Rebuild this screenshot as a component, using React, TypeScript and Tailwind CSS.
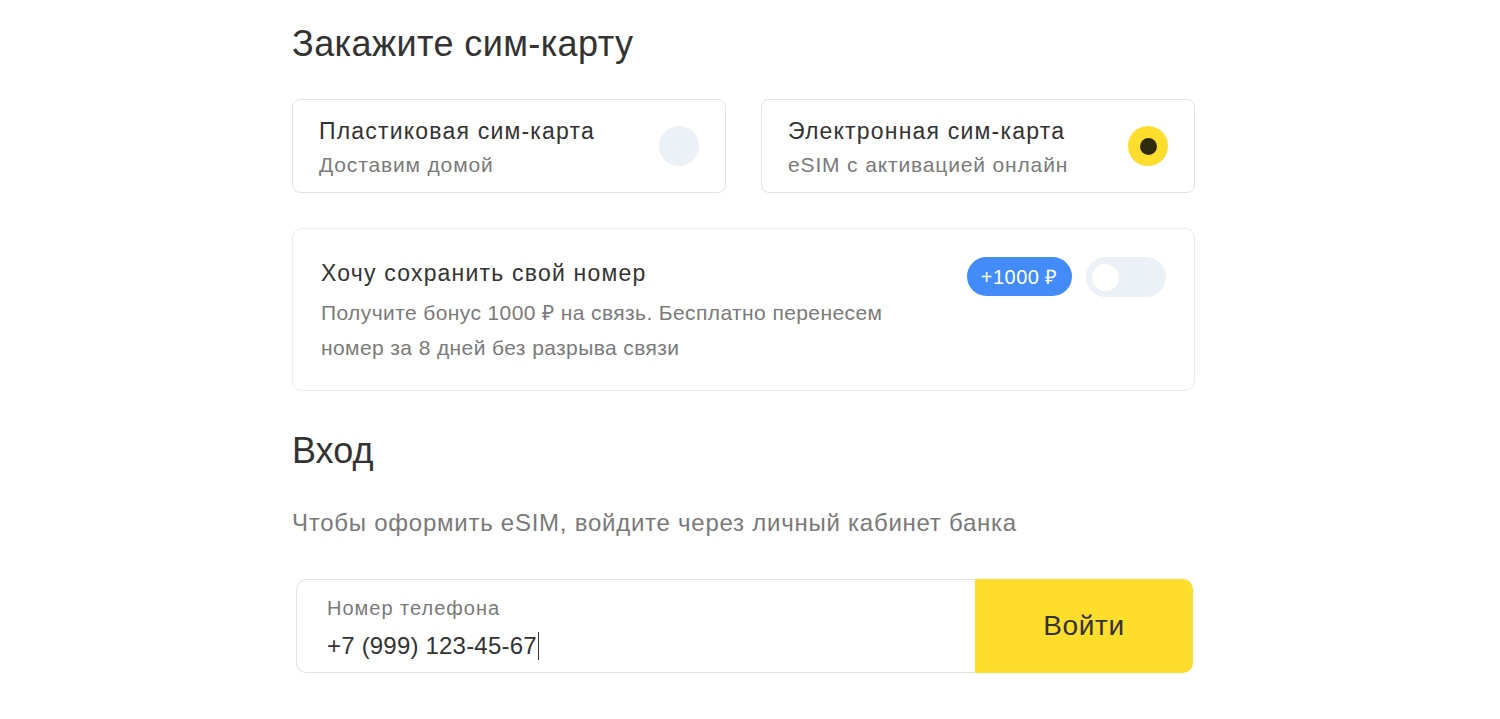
import React, { useState } from 'react';

const font = { fontFamily: '"Liberation Sans", Arial, sans-serif' };

type SimOption = { id: string; title: string; subtitle: string };

const simOptions: SimOption[] = [
  { id: 'plastic', title: 'Пластиковая сим-карта', subtitle: 'Доставим домой' },
  { id: 'esim', title: 'Электронная сим-карта', subtitle: 'eSIM с активацией онлайн' },
];

const Radio = ({ checked }: { checked: boolean }) =>
  checked ? (
    <span className="flex h-10 w-10 shrink-0 items-center justify-center rounded-full bg-[#ffdd2d]">
      <span className="h-[17px] w-[17px] rounded-full bg-[#2e2a0e]" />
    </span>
  ) : (
    <span className="h-10 w-10 shrink-0 rounded-full bg-[#ecf1f7]" />
  );

export default function App() {
  const [sim, setSim] = useState('esim');
  const [keepNumber, setKeepNumber] = useState(false);

  return (
    <div className="min-h-screen bg-white text-[#333333]" style={font}>
      <div className="ml-[292px] w-[903px] pt-[17px]">
        {/* Выбор сим-карты */}
        <h1 className="text-[36px] leading-[54px] font-normal tracking-[0.4px]">Закажите сим-карту</h1>

        <div className="mt-[28px] grid grid-cols-2 gap-[35px]">
          {simOptions.map((o) => (
            <button
              key={o.id}
              onClick={() => setSim(o.id)}
              className="flex h-[94px] items-center justify-between rounded-[8px] border border-[#e3e3e3] pl-[26px] pr-[26px] text-left"
            >
              <div className="self-start pt-[15px]">
                <div className="text-[23px] leading-[32px] tracking-[1.2px] text-[#333333]">{o.title}</div>
                <div className="text-[21px] leading-[36px] tracking-[0.85px] text-[#7a7a7a]">{o.subtitle}</div>
              </div>
              <Radio checked={sim === o.id} />
            </button>
          ))}
        </div>

        {/* Перенос номера */}
        <div className="mt-[35px] flex h-[163px] justify-between rounded-[10px] border border-[#ececec] pl-[28px] pr-[28px] pt-[27px]">
          <div>
            <div className="text-[23px] leading-[34px] tracking-[1.2px] text-[#333333]">Хочу сохранить свой номер</div>
            <p className="mt-[5px] text-[21px] leading-[35px] tracking-[0.4px] text-[#7a7a7a]">
              Получите бонус 1000 ₽ на связь. Бесплатно перенесем
              <br />
              номер за 8 дней без разрыва связи
            </p>
          </div>
          <div className="flex items-start gap-[14px] pt-px">
            <span className="flex h-[39px] items-center rounded-full bg-[#428bf9] px-[14px] text-[20px] tracking-[0.5px] text-white">
              +1000 ₽
            </span>
            <button
              onClick={() => setKeepNumber(!keepNumber)}
              className={`flex h-10 w-20 items-center rounded-full px-[6px] ${keepNumber ? 'justify-end bg-[#ffdd2d]' : 'bg-[#ecf1f7]'}`}
            >
              <span className="h-[27px] w-[27px] rounded-full bg-white" />
            </button>
          </div>
        </div>

        {/* Вход */}
        <h2 className="mt-[35px] text-[36px] leading-[50px] font-normal">Вход</h2>
        <p className="mt-[32px] text-[24px] leading-[30px] tracking-[0.75px] text-[#7a7a7a]">
          Чтобы оформить eSIM, войдите через личный кабинет банка
        </p>

        <div className="mt-[41px] ml-[4px] flex h-[94px] w-[897px]">
          <label className="flex flex-1 flex-col rounded-l-[10px] border border-r-0 border-[#e3e3e3] pl-[30px] pt-[14px]">
            <span className="text-[20px] leading-[28px] tracking-[1px] text-[#7a7a7a]">Номер телефона</span>
            <span className="mt-[7px] flex items-center text-[24px] leading-[34px] tracking-[0.2px] text-[#333333]">
              +7 (999) 123-45-67
              <span className="ml-px h-[28px] w-px bg-[#333333]" />
            </span>
          </label>
          <button className="w-[218px] rounded-r-[10px] bg-[#ffdd2d] text-[28px] tracking-[0.6px] text-[#333333]">Войти</button>
        </div>
      </div>
    </div>
  );
}
